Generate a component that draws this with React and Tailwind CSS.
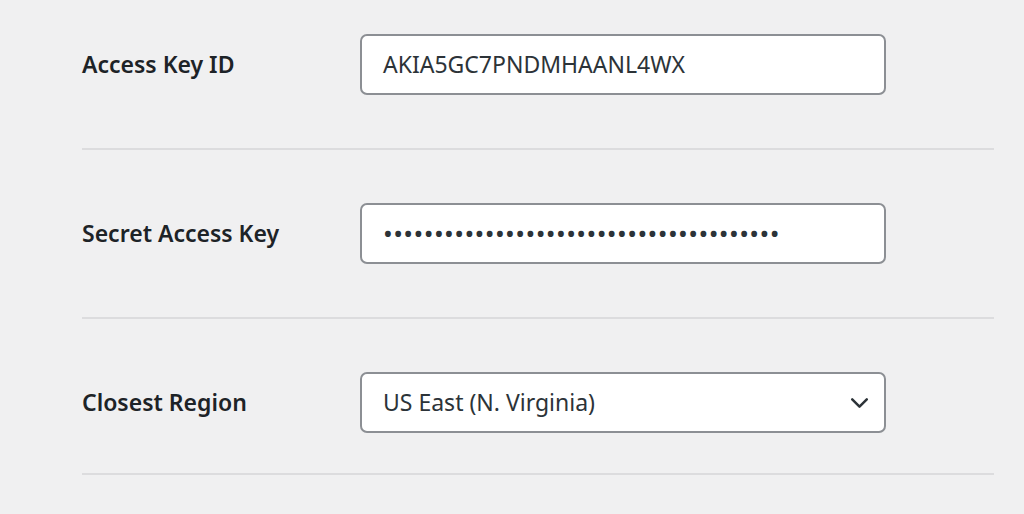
const rows = [
  { label: 'Access Key ID', value: 'AKIA5GC7PNDMHAANL4WX', kind: 'text' },
  { label: 'Secret Access Key', value: '•'.repeat(39), kind: 'password' },
  { label: 'Closest Region', value: 'US East (N. Virginia)', kind: 'select' },
];

function Field({ row }) {
  if (row.kind === 'select') {
    return (
      <div className="flex h-[61px] w-[526px] items-center justify-between rounded-[7px] border-2 border-[#8c8f94] bg-white pl-[21px] pr-[12px] text-[23px] text-[#2c3338]">
        <span>{row.value}</span>
        <svg width="25" height="25" viewBox="0 0 24 24" fill="none" stroke="#2c3338" strokeWidth="2.4" strokeLinecap="round" strokeLinejoin="round">
          <path d="M5 9l7 7 7-7" />
        </svg>
      </div>
    );
  }
  return (
    <div className="flex h-[61px] w-[526px] items-center rounded-[7px] border-2 border-[#8c8f94] bg-white pl-[21px] text-[23px] text-[#2c3338]">
      {row.kind === 'password'
        ? <span className="text-[26px] tracking-[0.4px] text-[#2c3338]">{row.value}</span>
        : <span>{row.value}</span>}
    </div>
  );
}

export default function App() {
  return (
    <div className="min-h-[514px] w-[1024px] bg-[#f0f0f1] pl-[82px] pr-[30px] pt-[34px]" style={{ fontFamily: '"Noto Sans", "Open Sans", sans-serif' }}>
      {rows.map((row, i) => (
        <div key={row.label} className={`flex items-center border-b-2 border-[#dcdcde] ${i === 0 ? 'pb-[53px]' : i === 1 ? 'pt-[53px] pb-[53px]' : 'pt-[53px] pb-[40px]'}`}>
          <div className="w-[278px] text-[23px] font-semibold text-[#1d2327]">{row.label}</div>
          <Field row={row} />
        </div>
      ))}
    </div>
  );
}
